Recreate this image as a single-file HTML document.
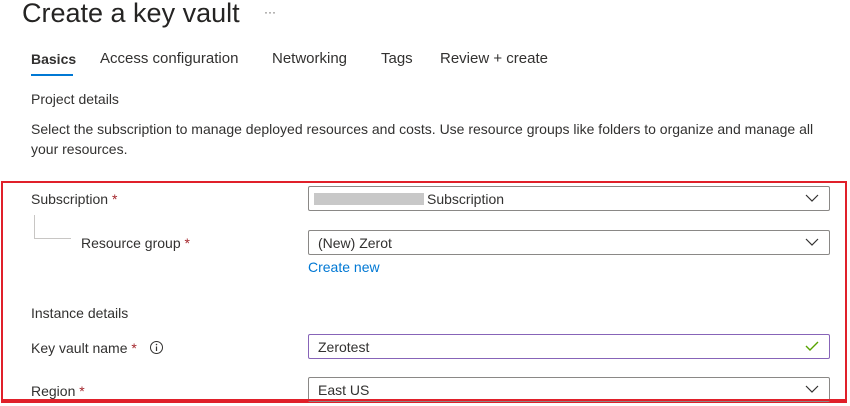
<!DOCTYPE html>
<html><head><meta charset="utf-8"><style>
body{margin:0;width:850px;height:406px;background:#fff;font-family:"Liberation Sans",sans-serif;color:#323130;position:relative;overflow:hidden}
.a{position:absolute;white-space:nowrap}
.t{font-size:14px}
.req{color:#a4262c}
.in{position:absolute;left:308px;width:520px;height:23px;border:1px solid #8a8886;border-radius:2px;background:#fff}
.in span{position:absolute;left:9px;top:4px;font-size:14px}
.chev{position:absolute;right:10px;top:6px}
</style></head><body>
<div class="a" style="left:22px;top:-2px;font-size:27px;color:#252423">Create a key vault</div>
<div class="a" style="left:264px;top:5px;font-size:12px;color:#605e5c">···</div>
<div class="a" style="left:31px;top:51px;font-size:14px;font-weight:bold;color:#323130">Basics</div>
<div class="a" style="left:31px;top:74px;width:42px;height:2px;background:#0078d4"></div>
<div class="a" style="left:100px;top:50px;font-size:15px">Access configuration</div>
<div class="a" style="left:272px;top:50px;font-size:15px">Networking</div>
<div class="a" style="left:381px;top:50px;font-size:15px">Tags</div>
<div class="a" style="left:440px;top:50px;font-size:15px">Review + create</div>
<div class="a t" style="left:31px;top:91px">Project details</div>
<div class="a t" style="left:31px;top:121px">Select the subscription to manage deployed resources and costs. Use resource groups like folders to organize and manage all</div>
<div class="a t" style="left:31px;top:141px">your resources.</div>
<div class="a" style="left:1px;top:181px;width:842px;height:218px;border:2px solid #e0202a"></div>
<div class="a t" style="left:31px;top:191px">Subscription <span class="req">*</span></div>
<div class="a" style="left:34px;top:215px;width:36px;height:23px;border-left:1px solid #c8c6c4;border-bottom:1px solid #c8c6c4"></div>
<div class="a t" style="left:81px;top:235px">Resource group <span class="req">*</span></div>
<div class="in" style="top:186px"><div class="a" style="left:5px;top:6px;width:110px;height:12px;background:#c8c8c8"></div><span style="left:118px">Subscription</span><svg class="chev" width="14" height="10"><path d="M1 2l6 6 6-6" fill="none" stroke="#323130" stroke-width="1.2"/></svg></div>
<div class="in" style="top:230px"><span>(New) Zerot</span><svg class="chev" width="14" height="10"><path d="M1 2l6 6 6-6" fill="none" stroke="#323130" stroke-width="1.2"/></svg></div>
<div class="a t" style="left:308px;top:259px;color:#0078d4">Create new</div>
<div class="a t" style="left:31px;top:305px">Instance details</div>
<div class="a t" style="left:31px;top:340px">Key vault name <span class="req">*</span></div>
<svg class="a" style="left:149px;top:340px" width="15" height="15"><circle cx="7.5" cy="7.5" r="6" fill="none" stroke="#323130" stroke-width="1"/><path d="M7.5 6.5v4.5" stroke="#323130" stroke-width="1.2"/><circle cx="7.5" cy="4.5" r=".8" fill="#323130"/></svg>
<div class="in" style="top:334px;border-color:#8764b8"><span>Zerotest</span><svg class="chev" width="14" height="12" style="top:5px"><path d="M1 6l4 4 8-8" fill="none" stroke="#57a300" stroke-width="1.4"/></svg></div>
<div class="a t" style="left:31px;top:383px">Region <span class="req">*</span></div>
<div class="in" style="top:377px"><span>East US</span><svg class="chev" width="14" height="10"><path d="M1 2l6 6 6-6" fill="none" stroke="#323130" stroke-width="1.2"/></svg></div>
<div class="a" style="left:1px;top:399px;width:846px;height:2px;background:#e0202a"></div>
</body></html>
